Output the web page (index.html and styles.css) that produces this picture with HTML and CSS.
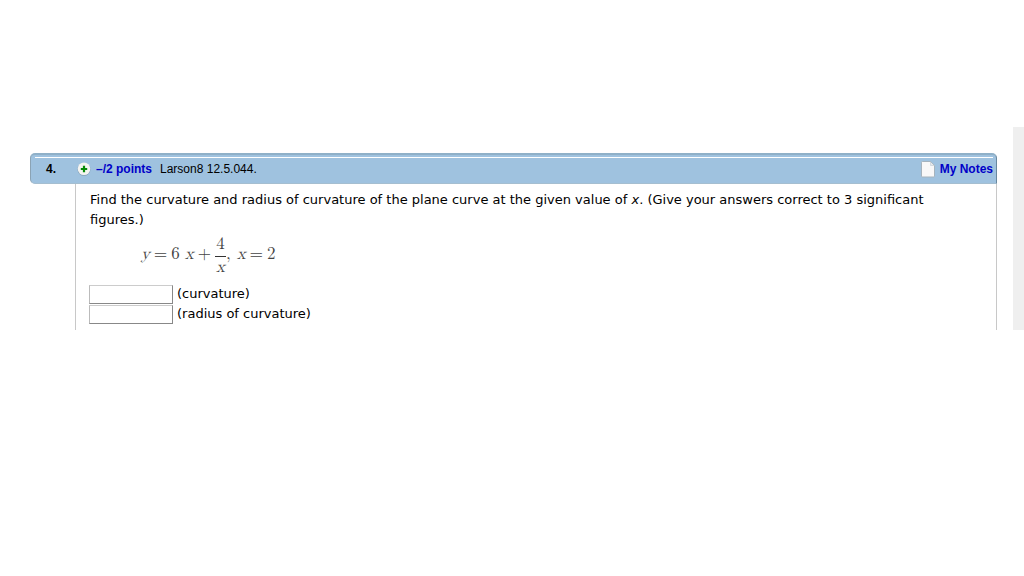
FILE: index.html
```html
<!DOCTYPE html>
<html lang="en">
<head>
<meta charset="utf-8">
<title>Larson8 12.5.044</title>
<link rel="stylesheet" href="styles.css">
</head>
<body>
<main class="viewport">
  <section class="question">
    <header class="question-header">
      <span class="number">4.</span>
      <button class="expand" type="button" aria-label="Show point details">
        <svg width="14" height="14" viewBox="0 0 14 14">
          <circle cx="7" cy="7.3" r="6.5" fill="#829fb4"/>
          <circle cx="7" cy="6.8" r="6.3" fill="#f4f4f1"/>
          <path d="M7 3.800v6.400M3.800 7h6.400" stroke="#078a07" stroke-width="2.2"/>
        </svg>
      </button>
      <a class="points" href="#">–/2 points</a>
      <span class="source">Larson8 12.5.044.</span>
      <a class="notes" href="#">
        <svg width="14" height="17" viewBox="0 0 14 17">
          <path d="M.5 1.5Q.5.5 1.5.5H9.5L13.5 4.5V15Q13.5 16 12.5 16H1.5Q.5 16 .5 15Z" fill="#f8f8f8" stroke="#a5b3bd"/>
          <path d="M9.500 1V4.500H13" fill="#e4e8eb" stroke="#d3d9dd"/>
        </svg>
        <span>My Notes</span>
      </a>
    </header>
    <div class="question-body">
      <p class="prompt">Find the curvature and radius of curvature of the plane curve at the given value of <i>x</i>. (Give your answers correct to 3 significant figures.)</p>
      <div class="equation">
        <i>y</i><span class="sign">=</span><span>6</span><i class="factor">x</i><span class="sign">+</span><span class="fraction"><span class="numerator">4</span><i class="denominator">x</i></span><span class="comma">,</span><i>x</i><span class="sign">=</span><span>2</span>
      </div>
      <div class="answer"><input id="curvature" type="text"><label for="curvature">(curvature)</label></div>
      <div class="answer"><input id="radius" type="text"><label for="radius">(radius of curvature)</label></div>
    </div>
  </section>
  <div class="scroll-track"></div>
</main>
</body>
</html>
```
FILE: styles.css
```css
* {
  box-sizing: border-box;
}
body {
  margin: 0;
  background: #fff;
  color: #000;
  font: 13px/20px Verdana, "DejaVu Sans", sans-serif;
}
.viewport {
  display: flex;
  margin-top: 127px;
}
.question {
  flex: 1;
  margin: 26px 16px 0 30px;
}
.scroll-track {
  width: 11px;
  background: #efefef;
}
.question-header {
  display: flex;
  align-items: center;
  height: 31px;
  padding: 0 3px 0 15px;
  border: 1px solid #8ba3b4;
  border-top: 2px solid #8fb0c8;
  border-right-color: #69889e;
  border-bottom-color: #a5bed0;
  border-radius: 5px 5px 0 5px;
  background:
    linear-gradient(#fff, #fff) 4px 2px / calc(100% - 7px) 1px no-repeat,
    #9fc2df;
  font: 12px/16px Arial, "Liberation Sans", sans-serif;
}
.number {
  width: 31px;
  font-weight: bold;
}
.expand {
  display: flex;
  margin: 0 5px 0 0;
  padding: 0;
  border: 0;
  background: none;
}
.points,
.notes {
  color: #0000c8;
  font-weight: bold;
  text-decoration: none;
}
.points {
  margin-right: 8px;
}
.notes {
  display: flex;
  align-items: center;
  gap: 5px;
  margin-left: auto;
}
.question-body {
  margin-left: 45px;
  padding: 6px 13px;
  border: solid #c8c8c8;
  border-width: 0 1px;
}
.prompt {
  margin: 0;
  padding: 0 45px 0 1px;
}
.equation {
  display: flex;
  align-items: center;
  height: 48px;
  margin: 0 0 6px 52px;
  color: #444;
  font: 17px/20px "Latin Modern Math", "Liberation Serif", serif;
}
.sign {
  margin: 0 4px;
}
.factor {
  margin-left: 5px;
}
.fraction {
  display: flex;
  flex-direction: column;
  text-align: center;
}
.numerator {
  width: 11px;
  border-bottom: 1px solid #333;
  line-height: 24px;
}
.denominator {
  line-height: 20px;
}
.comma {
  margin-right: 6px;
}
.answer {
  display: flex;
  align-items: center;
  gap: 4px;
  height: 20px;
}
.answer input {
  width: 84px;
  height: 19px;
  padding: 1px 3px;
  border: 1px solid #888;
  border-top-color: #ccc;
  border-left-color: #bbb;
  border-radius: 0;
  background: #fff;
  font: inherit;
}
```
